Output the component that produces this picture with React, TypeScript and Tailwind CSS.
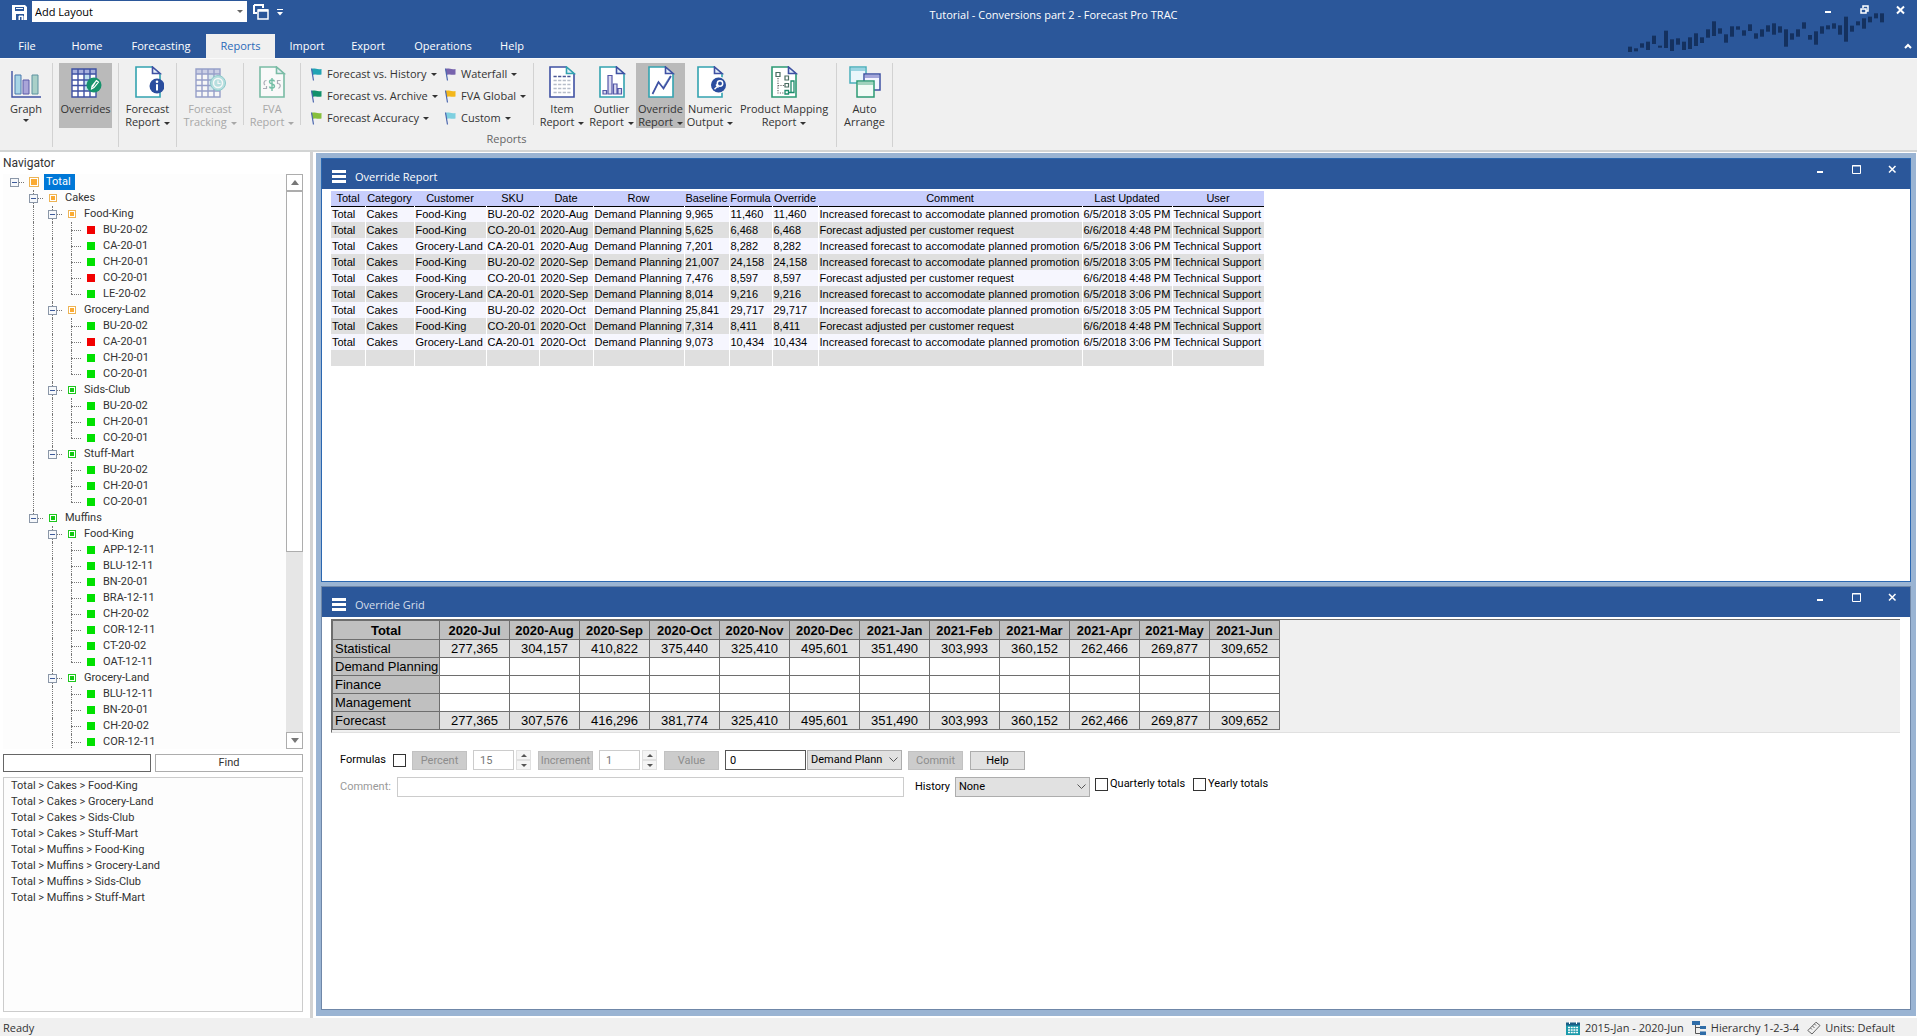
import { useState, type ReactNode } from 'react'
import clsx from 'clsx'

const UI = "font-['Open_Sans','Noto_Sans',sans-serif]"
const ARIAL = "font-['Liberation_Sans',Arial,sans-serif]"
const ROBOTO = "font-['Roboto','Liberation_Sans',sans-serif]"

/* ---------- data ---------- */

type Status = 'orange' | 'green' | 'red' | 'ok'

interface TreeNode {
  label: string
  status: Status
  // more siblings follow below the visible part of the tree
  more?: boolean
  children?: TreeNode[]
}

const leaves = (codes: string[], overridden: string[] = []): TreeNode[] =>
  codes.map(code => ({ label: code, status: overridden.includes(code) ? 'red' : 'green' }))

const tree: TreeNode = {
  label: 'Total',
  status: 'orange',
  children: [
    {
      label: 'Cakes',
      status: 'orange',
      children: [
        { label: 'Food-King', status: 'orange', children: leaves(['BU-20-02', 'CA-20-01', 'CH-20-01', 'CO-20-01', 'LE-20-02'], ['BU-20-02', 'CO-20-01']) },
        { label: 'Grocery-Land', status: 'orange', children: leaves(['BU-20-02', 'CA-20-01', 'CH-20-01', 'CO-20-01'], ['CA-20-01']) },
        { label: 'Sids-Club', status: 'ok', children: leaves(['BU-20-02', 'CH-20-01', 'CO-20-01']) },
        { label: 'Stuff-Mart', status: 'ok', children: leaves(['BU-20-02', 'CH-20-01', 'CO-20-01']) },
      ],
    },
    {
      label: 'Muffins',
      status: 'ok',
      children: [
        { label: 'Food-King', status: 'ok', children: leaves(['APP-12-11', 'BLU-12-11', 'BN-20-01', 'BRA-12-11', 'CH-20-02', 'COR-12-11', 'CT-20-02', 'OAT-12-11']) },
        {
          label: 'Grocery-Land',
          status: 'ok',
          more: true,
          children: [...leaves(['BLU-12-11', 'BN-20-01', 'CH-20-02']), { label: 'COR-12-11', status: 'green', more: true }],
        },
      ],
    },
  ],
}

const searchResults = [
  'Total > Cakes > Food-King',
  'Total > Cakes > Grocery-Land',
  'Total > Cakes > Sids-Club',
  'Total > Cakes > Stuff-Mart',
  'Total > Muffins > Food-King',
  'Total > Muffins > Grocery-Land',
  'Total > Muffins > Sids-Club',
  'Total > Muffins > Stuff-Mart',
]

const reportColumns = [
  { name: 'Total', width: 'w-[34px]' },
  { name: 'Category', width: 'w-[49px]' },
  { name: 'Customer', width: 'w-[72px]' },
  { name: 'SKU', width: 'w-[53px]' },
  { name: 'Date', width: 'w-[54px]' },
  { name: 'Row', width: 'w-[91px]' },
  { name: 'Baseline', width: 'w-[45px]' },
  { name: 'Formula', width: 'w-[43px]' },
  { name: 'Override', width: 'w-[46px]' },
  { name: 'Comment', width: 'w-[264px]' },
  { name: 'Last Updated', width: 'w-[90px]' },
  { name: 'User', width: 'w-[92px]' },
]

const PROMO = 'Increased forecast to accomodate planned promotion'
const REQUEST = 'Forecast adjusted per customer request'

const reportRows = [
  ['Food-King', 'BU-20-02', '2020-Aug', '9,965', '11,460', PROMO, '6/5/2018 3:05 PM'],
  ['Food-King', 'CO-20-01', '2020-Aug', '5,625', '6,468', REQUEST, '6/6/2018 4:48 PM'],
  ['Grocery-Land', 'CA-20-01', '2020-Aug', '7,201', '8,282', PROMO, '6/5/2018 3:06 PM'],
  ['Food-King', 'BU-20-02', '2020-Sep', '21,007', '24,158', PROMO, '6/5/2018 3:05 PM'],
  ['Food-King', 'CO-20-01', '2020-Sep', '7,476', '8,597', REQUEST, '6/6/2018 4:48 PM'],
  ['Grocery-Land', 'CA-20-01', '2020-Sep', '8,014', '9,216', PROMO, '6/5/2018 3:06 PM'],
  ['Food-King', 'BU-20-02', '2020-Oct', '25,841', '29,717', PROMO, '6/5/2018 3:05 PM'],
  ['Food-King', 'CO-20-01', '2020-Oct', '7,314', '8,411', REQUEST, '6/6/2018 4:48 PM'],
  ['Grocery-Land', 'CA-20-01', '2020-Oct', '9,073', '10,434', PROMO, '6/5/2018 3:06 PM'],
].map(([customer, sku, date, baseline, formula, comment, updated]) => [
  'Total', 'Cakes', customer, sku, date, 'Demand Planning', baseline, formula, formula, comment, updated, 'Technical Support',
])

const months = ['2020-Jul', '2020-Aug', '2020-Sep', '2020-Oct', '2020-Nov', '2020-Dec', '2021-Jan', '2021-Feb', '2021-Mar', '2021-Apr', '2021-May', '2021-Jun']

const gridRows: { label: string; values?: string[] }[] = [
  { label: 'Statistical', values: ['277,365', '304,157', '410,822', '375,440', '325,410', '495,601', '351,490', '303,993', '360,152', '262,466', '269,877', '309,652'] },
  { label: 'Demand Planning' },
  { label: 'Finance' },
  { label: 'Management' },
  { label: 'Forecast', values: ['277,365', '307,576', '416,296', '381,774', '325,410', '495,601', '351,490', '303,993', '360,152', '262,466', '269,877', '309,652'] },
]

// top / bottom of every bar in the header artwork, in thirds of a pixel
const skyline = [
  [140, 156], [145, 154], [130, 143], [125, 150], [107, 132], [137, 143], [92, 144], [118, 153], [115, 134], [125, 150],
  [112, 147], [100, 138], [112, 129], [88, 113], [64, 108], [85, 101], [103, 128], [79, 110], [79, 89], [91, 107],
  [73, 93], [100, 116], [88, 110], [76, 95], [70, 104], [79, 98], [88, 140], [100, 119], [88, 110], [67, 86],
  [105, 119], [94, 134], [79, 101], [76, 88], [70, 86], [76, 104], [50, 125], [77, 95], [64, 76], [55, 86],
  [50, 67], [40, 55], [40, 67],
]

/* ---------- icons ---------- */

const BLUE = '#3f51a3'
const TEAL = '#33a3b0'
const GREEN = '#2c9a74'

function Svg({ w = 32, h = 32, children, className }: { w?: number; h?: number; children: ReactNode; className?: string }) {
  return (
    <svg width={w} height={h} viewBox={`0 0 ${w} ${h}`} fill="none" className={className} aria-hidden="true">
      {children}
    </svg>
  )
}

function Sheet({ stroke, fold = BLUE, children }: { stroke: string; fold?: string; children?: ReactNode }) {
  return (
    <Svg>
      <path d="M4 1H20L28 8V31H4Z" fill="#fff" stroke={stroke} strokeWidth="1.6" />
      <path d="M20.500 1V7.500H28Z" fill="#e3eef8" stroke={fold} strokeWidth="1.6" />
      {children}
    </Svg>
  )
}

function GraphIcon() {
  return (
    <Svg>
      <path d="M2 5V31H31" stroke={BLUE} strokeWidth="1.4" />
      <path d="M5 9h6v19H5z" fill="#a9d5e6" stroke="#4a78ae" />
      <path d="M13 14h6v14h-6z" fill="#a9a5d8" stroke="#5a5aa8" />
      <path d="M22 9h6v19h-6z" fill="#a9d0c8" stroke="#5d92a0" />
    </Svg>
  )
}

function TableArt() {
  return (
    <>
      <path d="M2 3h24v28H2z" fill="#fff" />
      <path d="M2 3h24v5H2z" fill="#a7b0dc" />
      <path d="M14 8h6v17h-6z" fill="#bfe0ec" />
      <path d="M2 3h24v28H2zM2 8h24M2 14h24M2 19.500h24M2 25h24M8 3v28M14 3v28M20 3v28" stroke={BLUE} strokeWidth="1.4" />
    </>
  )
}

function OverridesIcon() {
  return (
    <Svg>
      <TableArt />
      <circle cx="24" cy="19" r="7.500" fill="#15926b" />
      <path d="M21.500 23l.5-3 4.500-5.500 2 1.500-4.500 5.500zM26 15l-3.500 6" stroke="#fff" strokeWidth="1.1" />
    </Svg>
  )
}

function TrackingIcon() {
  return (
    <Svg className="opacity-50">
      <TableArt />
      <circle cx="24" cy="17" r="7.500" fill="#7fd0d0" stroke="#2ba3a5" />
      <circle cx="24" cy="17" r="4.500" stroke="#fff" strokeWidth="1.4" />
      <path d="M24 14.500V17.500h2.500" stroke="#fff" strokeWidth="1.2" />
    </Svg>
  )
}

function InfoReportIcon() {
  return (
    <Sheet stroke={TEAL}>
      <circle cx="25" cy="20" r="7.500" fill="#2a4d9e" />
      <circle cx="25" cy="15.800" r="1.300" fill="#fff" />
      <path d="M25 18.200V24.500" stroke="#fff" strokeWidth="2" />
    </Sheet>
  )
}

function FvaIcon() {
  return (
    <div className="opacity-60">
      <Sheet stroke={GREEN} fold={GREEN}>
        <path d="M16 12v13M18.500 15.500c-.5-2-5-2-5 .5s5 1.500 5 4-4.500 3-5 .5" stroke="#1f9d74" strokeWidth="1.4" />
        <path d="M10.500 14.500c-3 0-3 3.500-1.500 4.500M7 22.500h3.500v-2.500M24.500 14.500h-3v3c3 0 4 3 1 5" stroke="#7d7f92" strokeWidth="1.2" />
      </Sheet>
    </div>
  )
}

function ItemIcon() {
  return (
    <Sheet stroke={BLUE} fold={TEAL}>
      <path d="M7.500 10.500H25" stroke="#4b5794" strokeWidth="1.6" strokeDasharray="3.200 1.400" />
      <path d="M7.500 14.500H25M7.500 18.500H25M7.500 22.500H25M7.500 26.500H25" stroke="#b6bdc9" strokeWidth="1.300" strokeDasharray="3.200 1.400" />
    </Sheet>
  )
}

function OutlierIcon() {
  return (
    <Sheet stroke={TEAL}>
      <path d="M7 24.500h3.500v3.500H7zM12 9.500h4v18.500h-4zM17.500 18h3.500v10h-3.500zM22 22.500h3.500v5.500H22z" fill="#dcdaf0" stroke="#5558a8" strokeWidth="1.200" />
    </Sheet>
  )
}

function OverrideReportIcon() {
  return (
    <Sheet stroke={TEAL}>
      <path d="M8 27l5-11 5 5 7-11" stroke="#9fc4de" strokeWidth="1" />
      <path d="M7.500 28l6-12 5 6.500L26 10" stroke={BLUE} strokeWidth="1.700" />
    </Sheet>
  )
}

function NumericIcon() {
  return (
    <Sheet stroke={TEAL}>
      <circle cx="27" cy="19" r="8" fill="#f0f0f0" />
      <circle cx="24.500" cy="19" r="7.500" fill="#2a4d9e" />
      <circle cx="26" cy="17.500" r="2.700" stroke="#fff" strokeWidth="1.500" />
      <path d="M24 19.700L20.500 23.200M22 18.500l2.500 3" stroke="#fff" strokeWidth="1.400" />
    </Sheet>
  )
}

function MappingIcon() {
  return (
    <Sheet stroke={GREEN}>
      <path d="M8 6.500h4v4H8zM17 10h3.500v4H17zM17 17.500h3.500v3.500H17z" stroke="#4a6d62" strokeWidth="1.200" />
      <path d="M17 24.500h3.500v3.500H17zM23 27V15h3v11.500h-5" stroke="#1c8c6b" strokeWidth="1.300" />
      <path d="M10 12v15h6M10 19.500h6" stroke="#666" strokeWidth="1.200" strokeDasharray="1.200 1.200" />
    </Sheet>
  )
}

function ArrangeIcon() {
  return (
    <Svg>
      <path d="M1 1h16v16H1z" fill="#e9f6fb" stroke="#4aaebb" strokeWidth="1.500" />
      <path d="M2 2h14v3H2z" fill="#9ad4e2" />
      <path d="M15 8h16v16H15z" fill="#f4f5ff" stroke={BLUE} strokeWidth="1.500" />
      <path d="M16 9h14v3H16z" fill="#a3a5da" />
      <path d="M8 15h17v16H8z" fill="#f2fbf6" stroke={GREEN} strokeWidth="1.500" />
      <path d="M9 16h15v3H9z" fill="#9fd3bd" />
    </Svg>
  )
}

function Flag({ color }: { color: string }) {
  return (
    <Svg w={12} h={14}>
      <path d="M1.500 2c3-1.500 5 1 10 0v5.500c-4 1-4.500-1-9 .5z" fill={color} />
      <path d="M1.500 1.500L3.500 13.500" stroke="#4865ad" strokeWidth="1.200" />
    </Svg>
  )
}

function Caret() {
  return <span className="ml-1 inline-block border-x-[3px] border-t-[3px] border-x-transparent border-t-current align-middle" />
}

/* ---------- ribbon ---------- */

interface ToolProps {
  icon: ReactNode
  lines: string[]
  width: string
  menu?: boolean
  active?: boolean
  disabled?: boolean
}

function Tool({ icon, lines, width, menu, active, disabled }: ToolProps) {
  return (
    <button
      type="button"
      disabled={disabled}
      className={clsx('flex h-[65px] shrink-0 flex-col items-center pt-[3px] text-[11px] leading-[13px] whitespace-nowrap', width, active && 'bg-[#bababa]', disabled ? 'text-[#a8a8a8]' : 'text-[#333]')}
    >
      {icon}
      <span className="mt-1 flex flex-col items-center">
        {lines.map((line, i) => (
          <span key={line}>
            {line}
            {menu && i === lines.length - 1 && i > 0 && <Caret />}
          </span>
        ))}
        {menu && lines.length === 1 && (
          <span className="mt-1 border-x-[3px] border-t-[3px] border-x-transparent border-t-current" />
        )}
      </span>
    </button>
  )
}

function Divider({ short }: { short?: boolean }) {
  return <span className={clsx('w-px shrink-0 bg-[#d2d2d2]', short ? 'h-[62px]' : 'h-[84px]')} />
}

function FlagMenu({ items }: { items: [string, string][] }) {
  return (
    <div className="flex flex-col">
      {items.map(([label, color]) => (
        <button key={label} type="button" className="flex h-[22px] items-center text-[11px] whitespace-nowrap text-[#333]">
          <Flag color={color} />
          <span className="ml-[5px]">{label}</span>
          <Caret />
        </button>
      ))}
    </div>
  )
}

function Ribbon() {
  return (
    <div className="flex h-[92px] shrink-0 border-t border-[#fafafa] bg-[#f0f0f0] pt-1">
      <Tool icon={<GraphIcon />} lines={['Graph']} width="w-[52px]" menu />
      <Divider />
      <div className="px-[6px]">
        <Tool icon={<OverridesIcon />} lines={['Overrides']} width="w-[53px]" active />
      </div>
      <Divider />
      <Tool icon={<InfoReportIcon />} lines={['Forecast', 'Report']} width="w-[57px]" menu />
      <Divider />
      <div className="flex flex-col">
        <div className="flex">
          <Tool icon={<TrackingIcon />} lines={['Forecast', 'Tracking']} width="w-[66px]" menu disabled />
          <Divider short />
          <Tool icon={<FvaIcon />} lines={['FVA', 'Report']} width="w-[56px]" menu disabled />
          <Divider short />
          <div className="flex w-[232px] pl-[9px]">
            <div className="w-[134px]">
              <FlagMenu items={[['Forecast vs. History', '#21a3b4'], ['Forecast vs. Archive', '#12906a'], ['Forecast Accuracy', '#86bf3c']]} />
            </div>
            <FlagMenu items={[['Waterfall', '#7763ad'], ['FVA Global', '#f3b71b'], ['Custom', '#7fd0e0']]} />
          </div>
          <Divider short />
          <div className="flex pr-[3px] pl-[3px]">
            <Tool icon={<ItemIcon />} lines={['Item', 'Report']} width="w-[50px]" menu />
            <Tool icon={<OutlierIcon />} lines={['Outlier', 'Report']} width="w-[49px]" menu />
            <Tool icon={<OverrideReportIcon />} lines={['Override', 'Report']} width="w-[49px]" menu active />
            <Tool icon={<NumericIcon />} lines={['Numeric', 'Output']} width="w-[50px]" menu />
            <Tool icon={<MappingIcon />} lines={['Product Mapping', 'Report']} width="w-[98px]" menu />
          </div>
        </div>
        <div className="text-center text-[11px] leading-[20px] text-[#666]">Reports</div>
      </div>
      <Divider />
      <Tool icon={<ArrangeIcon />} lines={['Auto', 'Arrange']} width="w-[55px]" />
      <Divider />
    </div>
  )
}

function TitleBar() {
  const [layout, setLayout] = useState('Add Layout')
  const tabs = [
    ['File', 'w-[54px]'], ['Home', 'w-[66px]'], ['Forecasting', 'w-[82px] mr-1'], ['Reports', 'w-[69px]'],
    ['Import', 'w-[64px]'], ['Export', 'w-[58px]'], ['Operations', 'w-[92px]'], ['Help', 'w-[46px]'],
  ]
  return (
    <header className="relative shrink-0 bg-[#2b579a] text-white">
      <Svg w={256} h={58} className="absolute top-0 right-[33px]">
        {skyline.map(([top, bottom], i) => (
          <rect key={i} x={i * 6} y={top / 3} width="4" height={(bottom - top) / 3} fill="#14315f" />
        ))}
      </Svg>
      <div className="flex h-[34px] items-start">
        <button type="button" aria-label="Save layout" className="mt-[5px] ml-3">
          <Svg w={15} h={15}>
            <path d="M0 0h13l2 2v13H0z" fill="#fff" />
            <path d="M3 2h9v4H3zM4 9h8v6H4z" fill="#2b579a" />
            <path d="M4 3.500h7M7 11v4h4v-4z" stroke="#fff" fill="#fff" />
            <path d="M8 12h1.500v3H8z" fill="#2b579a" />
          </Svg>
        </button>
        <div className="relative mt-px ml-[5px] w-[215px]">
          <input
            aria-label="Layout"
            value={layout}
            onChange={e => setLayout(e.target.value)}
            className="block h-[21px] w-full bg-white px-[3px] text-[11px] text-black outline-none"
          />
          <span className="absolute top-[9px] right-1 border-x-[3px] border-t-[3px] border-x-transparent border-t-[#666]" />
        </div>
        <button type="button" aria-label="Windows" className="mt-[4px] ml-[6px]">
          <Svg w={16} h={16}>
            <path d="M1 1h9v3M1 1v8h3" stroke="#fff" strokeWidth="2" />
            <path d="M5 6h10v9H5z" stroke="#fff" strokeWidth="1.500" />
            <path d="M5 6.500h10" stroke="#fff" strokeWidth="2.500" />
          </Svg>
        </button>
        <button type="button" aria-label="Customize toolbar" className="mt-[9px] ml-[8px]">
          <Svg w={6} h={7}>
            <path d="M0 .5h6" stroke="#fff" />
            <path d="M0 3h6L3 6.500z" fill="#fff" />
          </Svg>
        </button>
        <h1 className="flex-1 pt-[6px] text-center text-[11px] leading-[18px]">Tutorial - Conversions part 2 - Forecast Pro TRAC</h1>
        <div className="mt-[5px] mr-[12px] flex gap-[27px]">
          <button type="button" aria-label="Minimize"><Svg w={9} h={10}><path d="M1 7h6" stroke="#fff" strokeWidth="2" /></Svg></button>
          <button type="button" aria-label="Restore">
            <Svg w={9} h={10}><path d="M3 3V1h5v5H6M1 4h5v4H1z" stroke="#fff" strokeWidth="1.500" /></Svg>
          </button>
          <button type="button" aria-label="Close"><Svg w={9} h={10}><path d="M1 1.500l7 7M8 1.500l-7 7" stroke="#fff" strokeWidth="2" /></Svg></button>
        </div>
      </div>
      <nav className="flex h-6 text-[11px]">
        {tabs.map(([label, width]) => (
          <button
            key={label}
            type="button"
            className={clsx('h-6', width, label === 'Reports' && 'bg-[#f0f0f0] text-[#2b6ab8]')}
          >
            {label}
          </button>
        ))}
        <button type="button" aria-label="Collapse ribbon" className="mr-[5px] ml-auto">
          <Svg w={8} h={6}><path d="M1 5l3-3 3 3" stroke="#fff" strokeWidth="2" /></Svg>
        </button>
      </nav>
    </header>
  )
}

/* ---------- navigator ---------- */

function StatusMark({ node, root }: { node: TreeNode; root?: boolean }) {
  if (!node.children) {
    return <span className={clsx('size-2', node.status === 'red' ? 'bg-[#f20000]' : 'bg-[#00e000]')} />
  }
  return (
    <span className={clsx('border bg-white p-px', root ? 'size-[10px]' : 'size-2', node.status === 'orange' ? 'border-[#edb456]' : 'border-[#1fc71f]')}>
      <span className={clsx('block size-full', node.status === 'orange' ? 'bg-[#fbab33]' : 'bg-[#12c912]')} />
    </span>
  )
}

function TreeRow({ node, trail, last }: { node: TreeNode; trail: boolean[]; last: boolean }) {
  const root = trail.length === 0
  return (
    <>
      <li className="flex h-4 items-stretch">
        {/* one 19px column per ancestor, dotted while that branch goes on */}
        {trail.map((open, i) => (
          <span key={i} className="w-[19px] shrink-0 pl-[9px]">
            {open && <span className="block h-4 border-l border-dotted border-[#777]" />}
          </span>
        ))}
        <span className="relative flex w-[19px] shrink-0 items-center">
          {!root && <span className={clsx('absolute top-0 left-[9px] border-l border-dotted border-[#777]', last ? 'h-2' : 'h-4')} />}
          <span className="absolute top-2 right-0 left-[9px] border-t border-dotted border-[#777]" />
          {node.children && (
            <button type="button" aria-label={`Collapse ${node.label}`} className="relative ml-[5px] flex size-[9px] items-center justify-center border border-[#8b97a8] bg-[#f6f8fb]">
              <span className="h-px w-[5px] bg-[#3d5a9a]" />
            </button>
          )}
        </span>
        <span className="flex w-[19px] shrink-0 items-center justify-center">
          <StatusMark node={node} root={root} />
        </span>
        <span className={clsx('ml-px px-[2px] leading-4', root && 'w-[31px] bg-[#0078d7] text-white')}>{node.label}</span>
      </li>
      {node.children?.map((child, i) => {
        const isLast = i === node.children!.length - 1 && !child.more
        return <TreeRow key={child.label} node={child} trail={[...trail, !root && !last]} last={isLast} />
      })}
    </>
  )
}

function Navigator() {
  const [query, setQuery] = useState('')
  return (
    <aside className={clsx('flex w-[310px] shrink-0 flex-col bg-white pr-[7px] pl-[3px] text-[#333]', ROBOTO)}>
      <h2 className="h-[22px] text-[12px] leading-[22px]">Navigator</h2>
      <div className="flex min-h-0 flex-1 bg-[#fdfdfd]">
        <ul className="min-w-0 flex-1 overflow-hidden pl-[2px] text-[11px] whitespace-nowrap">
          <TreeRow node={tree} trail={[]} last />
        </ul>
        <div className="flex w-[17px] flex-col bg-[#e6e6e6]">
          <button type="button" aria-label="Scroll up" className="flex h-[17px] items-center justify-center border border-[#adadad] bg-white">
            <span className="border-x-[4px] border-b-[5px] border-x-transparent border-b-[#777]" />
          </button>
          <div className="flex-[2] border border-[#adadad] bg-white" />
          <div className="flex-1" />
          <button type="button" aria-label="Scroll down" className="flex h-[17px] items-center justify-center border border-[#adadad] bg-white">
            <span className="border-x-[4px] border-t-[5px] border-x-transparent border-t-[#777]" />
          </button>
        </div>
      </div>
      <div className="mt-[5px] grid grid-cols-2 gap-1 text-[11px]">
        <input aria-label="Find item" value={query} onChange={e => setQuery(e.target.value)} className="h-[18px] min-w-0 border border-[#666] bg-white px-1 outline-none" />
        <button type="button" className="h-[18px] border border-[#adadad] bg-white leading-4">Find</button>
      </div>
      <ul className="mt-[5px] mb-[6px] h-[235px] shrink-0 border border-[#ccc] bg-[#fdfdfd] pl-[7px] text-[11px] leading-4">
        {searchResults.map(path => <li key={path}>{path}</li>)}
      </ul>
    </aside>
  )
}

/* ---------- document windows ---------- */

function DocWindow({ title, active, children }: { title: string; active?: boolean; children: ReactNode }) {
  return (
    <section className={clsx('flex min-h-0 flex-1 flex-col border bg-white', active ? 'border-[#2b67b0]' : 'border-[#6f87a8]')}>
      <div className="flex h-[30px] shrink-0 items-center bg-[#2b579a] pl-[10px] text-white">
        <button type="button" aria-label={`${title} menu`} className="mt-[4px] flex flex-col gap-[2px]">
          <span className="h-[3px] w-[14px] bg-white" />
          <span className="h-[3px] w-[14px] bg-white" />
          <span className="h-[3px] w-[14px] bg-white" />
        </button>
        <h2 className={clsx('mt-[6px] ml-[9px] flex-1 text-[11px]', !active && 'text-[#d5deeb]')}>{title}</h2>
        <div className="mr-[13px] mb-[9px] flex gap-[27px]">
          <button type="button" aria-label="Minimize"><Svg w={9} h={9}><path d="M1 7h6" stroke="#fff" strokeWidth="2" /></Svg></button>
          <button type="button" aria-label="Maximize"><Svg w={9} h={9}><path d="M.5.5h8v8h-8z" stroke="#fff" /><path d="M0 1h9" stroke="#fff" /></Svg></button>
          <button type="button" aria-label="Close"><Svg w={9} h={9}><path d="M1 1l6.500 6.500M7.500 1L1 7.500" stroke="#fff" strokeWidth="1.500" /></Svg></button>
        </div>
      </div>
      {children}
    </section>
  )
}

function OverrideReport() {
  return (
    <div className="min-h-0 flex-1 overflow-hidden pt-[2px] pl-[9px]">
      <table className={clsx('w-[933px] table-fixed border-collapse text-[11px] leading-[14px] whitespace-nowrap text-black', ARIAL)}>
        <thead>
          <tr className="h-[15px] border-b border-black bg-[#c8cefc]">
            {reportColumns.map(col => (
              <th key={col.name} className={clsx('p-0 text-center font-normal', col.width)}>{col.name}</th>
            ))}
          </tr>
        </thead>
        <tbody>
          {[...reportRows, reportColumns.map(() => '')].map((row, r) => (
            <tr key={r} className={clsx('h-4', r % 2 ? 'bg-[#dfdfdf]' : 'bg-[#f6f6fe]')}>
              {row.map((cell, c) => (
                <td key={c} className="border-r border-white p-0 pl-px">{cell}</td>
              ))}
            </tr>
          ))}
        </tbody>
      </table>
    </div>
  )
}

function Spinner({ label }: { label: string }) {
  return (
    <div className="ml-[2px] flex w-[15px] flex-col">
      <button type="button" disabled aria-label={`Increase ${label}`} className="flex h-[10px] items-center justify-center border border-[#e0e0e0] bg-[#f4f4f4]">
        <span className="border-x-[3px] border-b-[3px] border-x-transparent border-b-[#555]" />
      </button>
      <button type="button" disabled aria-label={`Decrease ${label}`} className="flex h-[10px] items-center justify-center border border-[#e0e0e0] bg-[#f4f4f4]">
        <span className="border-x-[3px] border-t-[3px] border-x-transparent border-t-[#555]" />
      </button>
    </div>
  )
}

function PushButton({ children, disabled, className }: { children: ReactNode; disabled?: boolean; className?: string }) {
  return (
    <button
      type="button"
      disabled={disabled}
      className={clsx('h-[19px] w-[55px] border text-center leading-[17px]', disabled ? 'border-[#c2c2c2] bg-[#cccccc] text-[#8c8c8c]' : 'border-[#adadad] bg-[#e1e1e1] text-black', className)}
    >
      {children}
    </button>
  )
}

function Tick({ label, className }: { label: string; className?: string }) {
  return (
    <label className={clsx('flex items-center gap-[2px]', className)}>
      <input type="checkbox" className="size-[13px] appearance-none border border-[#333] bg-white checked:bg-[#333]" />
      {label}
    </label>
  )
}

function Picker({ label, options, className }: { label: string; options: string[]; className: string }) {
  return (
    <div className={clsx('relative', className)}>
      <select aria-label={label} className="block h-5 w-full appearance-none overflow-hidden border border-[#adadad] bg-[#e1e1e1] pr-[18px] pl-[3px] leading-[18px] text-black outline-none">
        {options.map(o => <option key={o}>{o}</option>)}
      </select>
      <Svg w={9} h={6} className="pointer-events-none absolute top-[7px] right-1">
        <path d="M.5.5l4 4 4-4" stroke="#555" />
      </Svg>
    </div>
  )
}

function OverrideGrid() {
  return (
    <div className={clsx('min-h-0 flex-1 overflow-hidden pt-[2px] pl-[9px] text-[11px]', ROBOTO)}>
      <div className="mr-[10px] border-t border-b border-l border-t-[#6e6e6e] border-b-[#e0e0e0] border-l-[#6e6e6e] bg-[#f0f0f0] pb-[2px]">
        <table className={clsx('w-[948px] table-fixed border-collapse text-[13px] leading-[17px] text-black', ARIAL)}>
          <thead>
            <tr className="h-[19px] bg-[#c0c0c0]">
              <th className="w-[107px] border border-[#6e6e6e] p-0">Total</th>
              {months.map(m => <th key={m} className="border border-[#6e6e6e] p-0">{m}</th>)}
            </tr>
          </thead>
          <tbody>
            {gridRows.map(row => (
              <tr key={row.label} className="h-[18px]">
                <th className="border border-[#6e6e6e] bg-[#c0c0c0] p-0 pl-[2px] text-left font-normal whitespace-nowrap">{row.label}</th>
                {months.map((m, i) => (
                  <td key={m} className={clsx('border border-[#6e6e6e] p-0 text-center', row.values ? 'bg-[#e1e1e1]' : 'bg-white')}>{row.values?.[i]}</td>
                ))}
              </tr>
            ))}
          </tbody>
        </table>
      </div>

      <div className="mt-[17px] flex items-center pl-[9px]">
        <label htmlFor="formulas" className="w-[53px] text-black">Formulas</label>
        <input id="formulas" type="checkbox" className="size-[13px] appearance-none border border-[#333] bg-white checked:bg-[#333]" />
        <PushButton disabled className="ml-[6px]">Percent</PushButton>
        <input aria-label="Percent" disabled defaultValue="15" className="ml-[6px] h-5 w-[41px] border border-[#ccc] bg-white px-[6px] text-[#777]" />
        <Spinner label="percent" />
        <PushButton disabled className="ml-[7px]">Increment</PushButton>
        <input aria-label="Increment" disabled defaultValue="1" className="ml-[6px] h-5 w-[41px] border border-[#ccc] bg-white px-[6px] text-[#777]" />
        <Spinner label="increment" />
        <PushButton disabled className="ml-[7px]">Value</PushButton>
        <input aria-label="Value" defaultValue="0" className="ml-[6px] h-5 w-[81px] border border-[#555] bg-white px-1 text-black outline-none" />
        <Picker label="Override row" options={['Demand Planning', 'Finance', 'Management']} className="ml-px w-[95px]" />
        <PushButton disabled className="ml-[6px]">Commit</PushButton>
        <PushButton className="ml-[7px]">Help</PushButton>
      </div>

      <div className="mt-[6px] flex items-center pl-[9px]">
        <label htmlFor="comment" className="w-[57px] text-[#999]">Comment:</label>
        <input id="comment" className="h-5 w-[507px] border border-[#ccc] bg-white px-1 outline-none" />
        <span className="ml-[11px] w-[40px] text-black">History</span>
        <Picker label="History" options={['None']} className="w-[135px]" />
        <Tick label="Quarterly totals" className="mb-[5px] ml-[5px] w-[98px] text-black" />
        <Tick label="Yearly totals" className="mb-[5px] text-black" />
      </div>
    </div>
  )
}

/* ---------- status bar ---------- */

function StatusBar() {
  return (
    <footer className="flex h-[18px] shrink-0 items-center bg-[#f0f0f0] pt-px pr-[22px] pl-[3px] text-[11px] leading-[17px] text-[#333]">
      <span className="flex-1">Ready</span>
      <span className="flex items-center gap-[5px]">
        <Svg w={14} h={14}>
          <path d="M0 2h14v12H0z" fill="#1a9aab" />
          <path d="M0 1.500h14v3H0z" fill="#1b5e86" />
          <path d="M2 6.500h10M2 9h10M2 11.500h10" stroke="#fff" strokeWidth="1.500" strokeDasharray="2 .7" />
          <path d="M3.500 0v3M10.500 0v3" stroke="#fff" />
        </Svg>
        2015-Jan - 2020-Jun
      </span>
      <span className="ml-[8px] flex items-center gap-[5px]">
        <Svg w={14} h={14}>
          <path d="M0 0h8v4H0zM8 5h6v3H8zM8 10.500h6V14H8z" fill="#2f6da8" />
          <path d="M3.500 4v8.500H8M3.500 6.500H8" stroke="#555" />
        </Svg>
        Hierarchy 1-2-3-4
      </span>
      <span className="ml-[8px] flex items-center gap-[4px]">
        <Svg w={14} h={14}>
          <path d="M.8 9.500L9 1.200l4 3.300L5 13z" stroke="#666" />
          <path d="M3.500 7l1.500 1.500M5.500 5l2 2M7.500 3l1.500 1.500" stroke="#666" />
        </Svg>
        Units: Default
      </span>
    </footer>
  )
}

export default function App() {
  return (
    <div className={clsx('flex h-screen flex-col overflow-hidden bg-[#f0f0f0]', UI)}>
      <TitleBar />
      <Ribbon />
      <main className="flex min-h-0 flex-1 border-t-2 border-[#d2d4d4] bg-white">
        <Navigator />
        <div className="w-[3px] shrink-0 bg-[#d2d2d2]" />
        <div className="mt-px mr-px mb-[2px] ml-[3px] flex min-w-0 flex-1 flex-col gap-1 bg-[#9ab4d3] px-[5px] pt-[5px] pb-[6px]">
          <DocWindow title="Override Report" active>
            <OverrideReport />
          </DocWindow>
          <DocWindow title="Override Grid">
            <OverrideGrid />
          </DocWindow>
        </div>
      </main>
      <StatusBar />
    </div>
  )
}
